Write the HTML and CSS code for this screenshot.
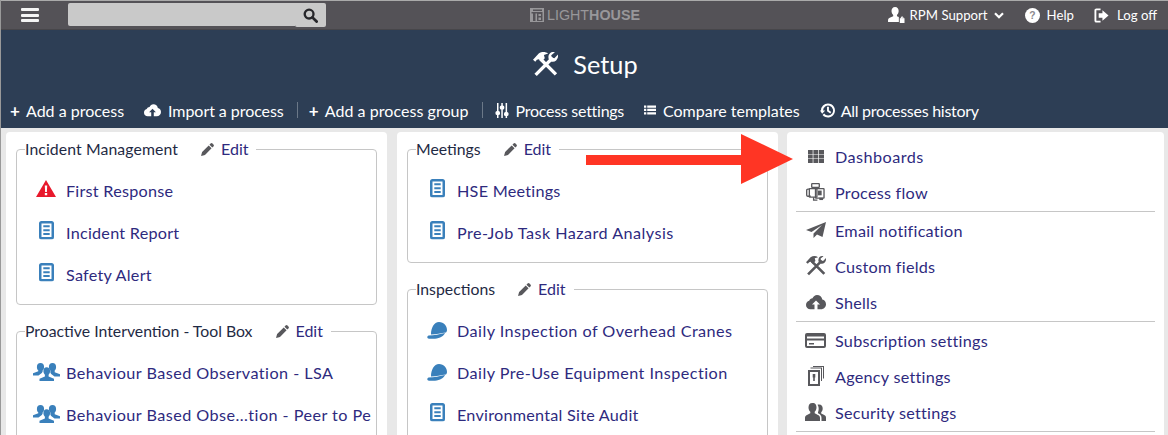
FILE: index.html
```html
<!DOCTYPE html>
<html lang="en">
<head>
<meta charset="utf-8">
<title>Setup</title>
<link rel="stylesheet" href="styles.css">
</head>
<body>
<svg class="defs" width="0" height="0" aria-hidden="true">
  <symbol id="doc" viewBox="0 0 15 18.500"><path fill-rule="evenodd" d="M2.500 0h10A2.500 2.500 0 0 1 15 2.500V16a2.500 2.500 0 0 1-2.500 2.500h-10A2.500 2.500 0 0 1 0 16V2.500A2.500 2.500 0 0 1 2.500 0zM2.500 2.500V16h10V2.500zM4.300 4.300h6.400v2H4.300zM4.300 8.200h6.400v2H4.300zM4.300 12.100h6.400v2H4.300z"/></symbol>
  <symbol id="team" viewBox="0 0 27 18"><path d="M7.500 0c2.300 0 3.600 1.700 3.600 3.900 0 1.600-.8 2.900-1.500 3.600v1.300l-.8 1.100-3.300 2.600H0v-2.300l5.300-2V7.500C4.600 6.800 3.900 5.500 3.900 3.900 3.900 1.700 5.200 0 7.500 0z"/><path d="M19.500 0c2.300 0 3.600 1.700 3.600 3.900 0 1.600-.7 2.900-1.400 3.600v1.700l5.300 2v2.300h-5.500l-3.300-2.600-.8-1.100V7.500c-.7-.7-1.500-2-1.500-3.600C15.900 1.700 17.200 0 19.500 0z"/><path d="M13.500 4.200c2.300 0 3.600 1.700 3.600 3.900 0 1.600-.8 2.900-1.500 3.600v1.700l5.400 2.300V18H6.500v-2.300l5.400-2.300v-1.700c-.7-.7-1.500-2-1.500-3.600 0-2.200 1.300-3.900 3.100-3.900z"/></symbol>
  <symbol id="helmet" viewBox="0 0 20 17"><path d="M4 12.500C4 6 7 0 12 0c5 0 8 4 8 8 0 1-.5 2-1 2.500-5 .5-10 2-15 2z"/><path d="M1.500 13.500c5.500 0 11.500-1.500 16.500-2.500-1 3-5 5-10 5.700-3 .3-6.500.3-7.500-.7-.5-1 0-2.200 1-2.500z"/></symbol>
  <symbol id="pencil" viewBox="0 0 14 14"><path d="M10.300.6a1.500 1.500 0 0 1 2.100 0l1 1a1.500 1.500 0 0 1 0 2.100l-1.200 1.200L9.100 1.800zM8.300 2.600l3.100 3.100L4.300 12.800 0 14l1.200-4.300z"/></symbol>
  <symbol id="tools" viewBox="0 0 24 24"><path d="M0 7.500 5.500 1.500C8.500-.5 12 -.3 14.500 1.500L10.500 2.800l.8 3.200-3.300 3.300-2.300-2.300-2 .4-1.500 2z"/><path d="M7 6.500 22 21.500M19 5.500 2.500 22" fill="none" stroke="currentColor" stroke-width="3.200"/><path d="M24 2.500 20.500 6 18 5.300 17.500 3 21 .3C17.500-.8 14 2 15 6.500L17.500 9C21 10.500 24.800 6.500 24 2.500z"/></symbol>
  <symbol id="cloud" viewBox="0 0 20 15"><path fill-rule="evenodd" d="M11 0c2.800 0 5 2 5.300 4.500 2.100.4 3.700 2.300 3.700 4.800 0 2.800-2.200 5-5 5H11.500v-4.800h2.500L10 5.500 6 9.500h2.500v4.800H4.300C1.900 14.300 0 12.400 0 10c0-2 1.300-3.700 3.200-4.200C3.800 4.300 5 3.300 6.500 3.300 7.400 1.300 9 0 11 0z"/></symbol>
</svg>

<header class="topbar">
  <button class="menu-btn" type="button" aria-label="Menu"><span></span><span></span><span></span></button>
  <div class="search">
    <div class="search-field"></div>
    <div class="search-btn">
      <svg viewBox="0 0 16 16" class="i14"><circle cx="6.500" cy="6.500" r="4.700" fill="none" stroke="currentColor" stroke-width="2.500"/><path d="M10 10l4.500 4.500" stroke="currentColor" stroke-width="3" stroke-linecap="round"/></svg>
    </div>
  </div>
  <div class="logo">
    <svg viewBox="0 0 14 14" class="logo-mark"><path fill-rule="evenodd" d="M0 0h14v14H0zM1.500 4v1.500H3V13h2.500V5.500H7V13h5.500V4zM3 1.500V3h9V1.500zM8.500 6h2.500v2h-2.500zM8.500 9.500h2.500V12h-2.500z"/></svg>
    <span class="logo-light">LIGHT</span><span class="logo-bold">HOUSE</span>
  </div>
  <nav class="user-nav">
    <a class="user-link user-rpm">
      <svg viewBox="0 0 18 17" class="i-user"><path d="M7.500 0c2.500 0 3.800 1.800 3.800 4.200 0 2-1 3.500-1.800 4.300v1.200l2 .8V16H0v-2c0-1.800 1.500-2.500 3-3l2.500-1.300V8.500C4.700 7.700 3.700 6.200 3.700 4.200 3.700 1.800 5 0 7.500 0zM12.500 12h5v5h-5zM13.500 12c0-2.500 3-2.500 3 0h-1c0-1-1-1-1 0z"/></svg>
      RPM Support
      <svg viewBox="0 0 10 7" class="i-chev"><path d="M1 1.300 5 5.300l4-4" fill="none" stroke="currentColor" stroke-width="2.200"/></svg>
    </a>
    <a class="user-link user-help">
      <svg viewBox="0 0 16 16" class="i-help"><circle cx="8" cy="8" r="8" fill="#fff"/><text x="8" y="11.500" class="help-q">?</text></svg>
      Help
    </a>
    <a class="user-link user-off">
      <svg viewBox="0 0 16 16" class="i-off"><path d="M7 1.500H2.500A1 1 0 0 0 1.500 2.500v11a1 1 0 0 0 1 1H7" fill="none" stroke="currentColor" stroke-width="2"/><path d="M9 2.500 15.500 8 9 13.500V10.500H5v-5h4z"/></svg>
      Log off
    </a>
  </nav>
</header>

<section class="hero">
  <h1 class="title">
    <svg class="title-icon"><use href="#tools"/></svg>
    Setup
  </h1>
  <nav class="actions">
    <a class="action"><span class="plus">+</span>Add a process</a>
    <a class="action gap-l snug"><svg class="i-cloud"><use href="#cloud"/></svg>Import a process</a>
    <span class="sep"></span>
    <a class="action loose"><span class="plus">+</span>Add a process group</a>
    <span class="sep"></span>
    <a class="action tight">
      <svg viewBox="0 0 14 15" class="i-sliders"><path d="M2 0h1.500v15H2zM6.300 0h1.500v15H6.300zM10.600 0h1.500v15h-1.500z"/><rect x="0.500" y="8" width="4.500" height="4" rx="1.500"/><rect x="4.800" y="2.500" width="4.500" height="4" rx="1.500"/><rect x="9" y="9" width="4.500" height="4" rx="1.500"/></svg>
      Process settings</a>
    <a class="action gap-l">
      <svg viewBox="0 0 13 10" class="i-list"><path d="M0 0h2.500v2.500H0zM3.500 0H13v2.500H3.500zM0 3.700h2.500v2.500H0zM3.500 3.700H13v2.500H3.500zM0 7.400h2.500V10H0zM3.500 7.400H13V10H3.500z"/></svg>
      Compare templates</a>
    <a class="action gap-l tight">
      <svg viewBox="0 0 16 15" class="i-hist"><path d="M8.500 0a7.500 7.500 0 1 1-5.800 12.300l1.700-1.500A5.300 5.300 0 1 0 3.300 7.500H5.500L2.300 11 0 7.500h1A7.500 7.500 0 0 1 8.500 0z"/><path d="M7.500 3.500h2v3.800l2.500 1.700-1.100 1.600-3.400-2.300z"/></svg>
      All processes history</a>
  </nav>
</section>

<main class="board">
  <div class="panel">
    <fieldset class="group">
      <legend class="group-head"><span class="group-name loose-name">Incident Management</span><a class="edit"><svg class="i-pencil"><use href="#pencil"/></svg>Edit</a></legend>
      <a class="proc"><span class="proc-i"><svg viewBox="0 0 20 17" class="i-warn"><path fill-rule="evenodd" d="M10 0l10 17H0zM8.800 5.500l.3 6.500h1.800l.3-6.500zM8.800 13v2.200h2.400V13z"/></svg></span>First Response</a>
      <a class="proc"><span class="proc-i"><svg class="i-doc"><use href="#doc"/></svg></span>Incident Report</a>
      <a class="proc"><span class="proc-i"><svg class="i-doc"><use href="#doc"/></svg></span>Safety Alert</a>
    </fieldset>
    <fieldset class="group">
      <legend class="group-head"><span class="group-name">Proactive Intervention - Tool Box</span><a class="edit"><svg class="i-pencil"><use href="#pencil"/></svg>Edit</a></legend>
      <a class="proc wide"><span class="proc-i"><svg class="i-team"><use href="#team"/></svg></span>Behaviour Based Observation - LSA</a>
      <a class="proc wide"><span class="proc-i"><svg class="i-team"><use href="#team"/></svg></span>Behaviour Based Obse...tion - Peer to Pe</a>
    </fieldset>
  </div>

  <div class="panel">
    <fieldset class="group">
      <legend class="group-head"><span class="group-name">Meetings</span><a class="edit"><svg class="i-pencil"><use href="#pencil"/></svg>Edit</a></legend>
      <a class="proc"><span class="proc-i"><svg class="i-doc"><use href="#doc"/></svg></span>HSE Meetings</a>
      <a class="proc wide"><span class="proc-i"><svg class="i-doc"><use href="#doc"/></svg></span>Pre-Job Task Hazard Analysis</a>
    </fieldset>
    <fieldset class="group">
      <legend class="group-head"><span class="group-name">Inspections</span><a class="edit"><svg class="i-pencil"><use href="#pencil"/></svg>Edit</a></legend>
      <a class="proc wide"><span class="proc-i"><svg class="i-helmet"><use href="#helmet"/></svg></span>Daily Inspection of Overhead Cranes</a>
      <a class="proc wide"><span class="proc-i"><svg class="i-helmet"><use href="#helmet"/></svg></span>Daily Pre-Use Equipment Inspection</a>
      <a class="proc"><span class="proc-i"><svg class="i-doc"><use href="#doc"/></svg></span>Environmental Site Audit</a>
    </fieldset>
  </div>

  <aside class="panel side">
    <ul class="menu">
      <li class="wide"><span class="m-i"><svg viewBox="0 0 16 13" class="i-grid"><path d="M0 0h4.700v4H0zM5.400 0h4.700v4H5.400zM10.800 0H16v4h-5.200zM0 4.500h4.700v4H0zM5.400 4.500h4.700v4H5.400zM10.800 4.500H16v4h-5.200zM0 9h4.700v4H0zM5.400 9h4.700v4H5.400zM10.800 9H16v4h-5.200z"/></svg></span>Dashboards</li>
      <li><span class="m-i"><svg viewBox="0 0 20 19" class="i-flow"><g fill="none" stroke="currentColor" stroke-width="1.400"><rect x="6" y=".7" width="8" height="4" rx=".5"/><path d="M4 6.500H2a1.300 1.300 0 0 0-1.300 1.300v5A1.300 1.300 0 0 0 2 14h3"/><rect x="3.500" y="6" width="8" height="9" rx=".5"/><rect x="10" y="6" width="9" height="10" rx=".5"/><path d="M8 15v3h4"/></g><rect x="12.500" y="8" width="4" height="5"/><path d="M14 15.500h4V18h-4z"/></svg></span>Process flow</li>
      <li class="rule"></li>
      <li><span class="m-i"><svg viewBox="0 0 20 16" class="i-plane"><path d="M20 0 16.500 15 11 12.500 7.500 16V11.500L16 3 5.500 10 0 8z"/></svg></span>Email notification</li>
      <li><span class="m-i"><svg viewBox="0 0 24 24" class="i-tools"><use href="#tools"/></svg></span>Custom fields</li>
      <li><span class="m-i"><svg viewBox="0 0 20 15" class="i-cloud2"><use href="#cloud"/></svg></span>Shells</li>
      <li class="rule"></li>
      <li><span class="m-i"><svg viewBox="0 0 21 15" class="i-card"><path fill-rule="evenodd" d="M2 0h17a2 2 0 0 1 2 2v11a2 2 0 0 1-2 2H2a2 2 0 0 1-2-2V2a2 2 0 0 1 2-2zM2 3.500v2h17v-2zM2 7.500V13h17V7.500zM4 10h5v1.500H4z"/></svg></span>Subscription settings</li>
      <li><span class="m-i"><svg viewBox="0 0 16 20" class="i-agency"><path fill-rule="evenodd" d="M0 4h12v16H0zM2 6v12h8V6zM4.700 8h2.600v3.500h-.5V15H5.200v-3.500h-.5z"/><path d="M2.500 1.500H14V15h-1V2.500H2.500zM5 0h11v12.500h-1V1H5z"/></svg></span>Agency settings</li>
      <li><span class="m-i"><svg viewBox="0 0 21 18" class="i-sec"><path d="M7.500 0c3 0 4 2 4 4.500 0 1.800-.8 3.300-1.800 4.300v1.500l3.300 1.700c1.500.8 2 1.700 2 3V18H0v-3c0-1.300.5-2.200 2-3l3.300-1.700V8.800C4.300 7.800 3.500 6.300 3.500 4.500 3.500 2 4.500 0 7.500 0z"/><path d="M14 1.500c2.700 0 3.700 1.800 3.700 4 0 1.600-.7 3-1.500 3.800v1.200l3 1.500c1.200.6 1.800 1.500 1.800 2.700V18h-4.500v-3c0-2-1-3.300-2.500-4.200l-1-.5V9.300C13.400 8 14 6.500 13.500 4c-.2-1-.6-1.800-1-2.300.4-.1 1-.2 1.500-.2z"/></svg></span>Security settings</li>
      <li class="rule"></li>
    </ul>
  </aside>
</main>

<svg class="arrow" viewBox="0 0 207 50" aria-hidden="true"><path d="M0 21h155V0l52 25-52 25V31H0z"/></svg>
</body>
</html>
```

FILE: styles.css
```css
* { box-sizing: border-box; }
html, body { margin: 0; padding: 0; height: 435px; overflow: hidden; }
body {
  position: relative;
  background: #e8e8e8;
  font-family: "Lato", "Open Sans", sans-serif;
  font-size: 16px;
  color: #2e2a7e;
  border-left: 1px solid #999;
}
.defs { position: absolute; }
svg { fill: currentColor; display: block; flex: none; }
a { color: inherit; text-decoration: none; }

/* top bar */
.topbar {
  height: 30px;
  background: #545257;
  border-top: 1px solid #aaa;
  border-bottom: 1px solid #47464a;
  display: flex;
  align-items: center;
  color: #fff;
  position: relative;
}
.menu-btn {
  margin-left: 20px;
  width: 18px;
  height: 14px;
  padding: 0;
  border: 0;
  background: none;
  display: flex;
  flex-direction: column;
  justify-content: space-between;
}
.menu-btn span { display: block; height: 3px; border-radius: 1px; background: #f4f4f4; }
.search { display: flex; margin-left: 29px; height: 24px; }
.search-field { width: 227px; height: 23px; background: #c9c9c9; border-radius: 2px 0 0 2px; }
.search-btn {
  width: 31px; height: 24px;
  background: #c9c9c9;
  color: #26262a;
  border-radius: 0 2px 2px 2px;
  display: flex; align-items: center; justify-content: center;
}
.i14 { width: 15px; height: 15px; fill: none; }
.logo {
  margin-left: 204px;
  display: flex;
  align-items: center;
  color: #98979a;
  font-family: "Liberation Sans", sans-serif;
  font-size: 14.300px;
}
.logo-mark { width: 14px; height: 14px; margin-right: 3px; }
.logo-light { font-weight: 400; }
.logo-bold { font-weight: 700; }
.user-nav { margin-left: auto; display: flex; align-items: center; font-size: 13.200px; }
.user-link { display: flex; align-items: center; color: #fff; }
.user-rpm { margin-right: 21px; }
.user-help { margin-right: 20px; }
.user-off { margin-right: 11px; }
.i-user { width: 17px; height: 16px; margin-right: 5px; }
.i-chev { width: 10px; height: 7px; margin-left: 6px; }
.i-help { width: 15px; height: 15px; margin-right: 7px; }
.help-q { font: 700 11px "Liberation Sans", sans-serif; fill: #8a8a8e; text-anchor: middle; }
.i-off { width: 15px; height: 15px; margin-right: 8px; }

/* hero */
.hero { height: 98px; background: #2d3e55; color: #fff; display: flex; flex-direction: column; }
.title {
  margin: 17px 0 0;
  height: 34px;
  display: flex;
  align-items: center;
  justify-content: center;
  gap: 15px;
  font-size: 25.300px;
  font-weight: 400;
  padding-left: 2px;
}
.title-icon { width: 25px; height: 25px; }
.actions { display: flex; align-items: center; margin-top: 17px; padding-left: 9px; font-size: 16px; height: 24px; }
.action { display: flex; align-items: center; white-space: nowrap; }
.gap-l { margin-left: 20px; }
.tight { letter-spacing: -.27px; }
.snug { letter-spacing: -.06px; }
.loose { letter-spacing: .05px; }
.plus { font-weight: 700; font-size: 17px; width: 16px; line-height: 1; }
.sep { width: 1px; height: 16px; background: #6b7888; margin: 0 11px 0 13px; }
.i-cloud { width: 17px; height: 13px; margin-right: 7px; }
.i-sliders { width: 14px; height: 15px; margin: 0 7px 0 1px; }
.i-list { width: 12px; height: 10px; margin-right: 7px; }
.i-hist { width: 15px; height: 15px; margin-right: 6px; }

/* board */
.board { display: flex; align-items: flex-start; padding: 4px 3px 0 5px; gap: 10px; height: 307px; overflow: hidden; }
.panel {
  width: 381px;
  flex: none;
  background: #fff;
  border-radius: 4px;
  padding: 7px 10px 0;
  height: 320px;
  font-size: 16.200px;
  letter-spacing: .25px;
}
.group {
  margin: 0 0 16px;
  padding: 10px 0 9px 15px;
  border: 1px solid #c6c6c6;
  border-radius: 4px;
  min-width: 0;
}
.group-head { padding: 0 8px 0 0; margin-left: -7px; display: flex; align-items: center; line-height: 20px; font-size: 15.800px; letter-spacing: 0; }
.group-name { color: #1f2a44; }
.loose-name { letter-spacing: .1px; }
.edit { display: flex; align-items: center; margin-left: 23px; color: #2e2a7e; font-size: 16px; }
.i-pencil { width: 13px; height: 13px; margin-right: 7px; color: #58585c; }
.proc { display: flex; align-items: center; height: 42px; white-space: nowrap; overflow: hidden; }
.wide { letter-spacing: .45px; }
.proc-i { width: 34px; flex: none; display: flex; justify-content: center; padding-right: 6px; color: #3a80bb; }
.i-warn { width: 20px; height: 17px; color: #e8192c; margin-bottom: 3px; }
.i-doc { width: 15px; height: 18.500px; margin-bottom: 3px; }
.i-team { width: 27px; height: 18px; }
.i-helmet { width: 20px; height: 17px; }

/* side menu */
.side { width: 377px; margin-left: -1px; padding: 6px 9px 0; }
.menu { list-style: none; margin: 0; padding: 0; }
.menu li { display: flex; align-items: center; height: 36px; }
.menu li.rule { height: 1px; background: #c6c6c6; margin: 1px 0 0; }
.m-i { width: 39px; flex: none; display: flex; justify-content: center; color: #58585c; }
.i-grid { width: 16px; height: 13px; }
.i-flow { width: 19px; height: 18px; }
.i-plane { width: 20px; height: 16px; }
.i-tools { width: 20px; height: 20px; }
.i-cloud2 { width: 20px; height: 15px; }
.i-card { width: 21px; height: 15px; }
.i-agency { width: 16px; height: 20px; }
.i-sec { width: 21px; height: 18px; }

.arrow { position: absolute; left: 585px; top: 134px; width: 207px; height: 50px; fill: #ff3524; }
```
